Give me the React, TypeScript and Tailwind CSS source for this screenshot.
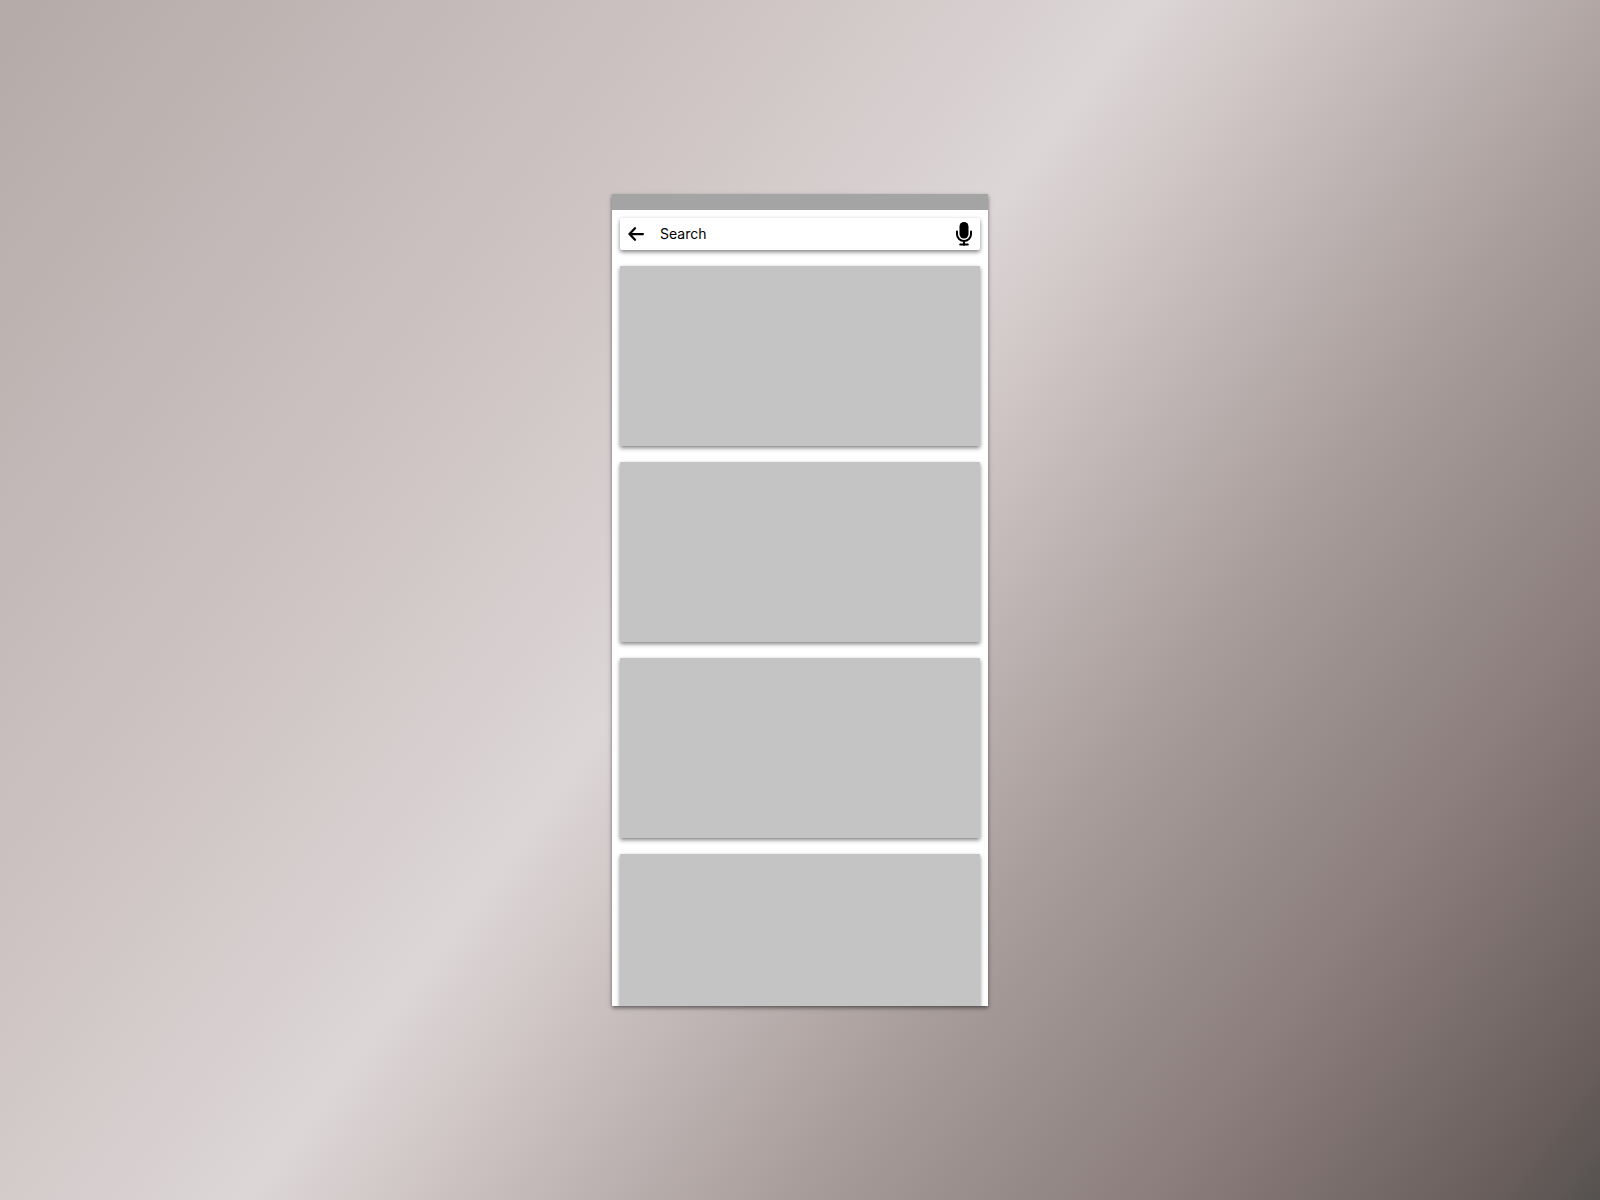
const cards = [1, 2, 3, 4];

function BackArrow() {
  return (
    <svg viewBox="0 0 16 14" className="h-3.5 w-4" fill="none" stroke="currentColor" strokeWidth="2.25" strokeLinecap="round" aria-hidden="true">
      <path d="M7 1.2 1.5 7 7 12.8M1.5 7H14.9" />
    </svg>
  );
}

function Microphone() {
  return (
    <svg viewBox="0 0 16 24" className="h-6 w-4" aria-hidden="true">
      <rect x="3.5" y="0" width="9" height="16.5" rx="4.5" fill="currentColor" />
      <path d="M1 9.5v2.7a7 6.8 0 0 0 14 0V9.5M8 19v4M4.2 22.5h7.6" fill="none" stroke="currentColor" strokeWidth="2" strokeLinecap="round" />
    </svg>
  );
}

export default function App() {
  return (
    <div className="flex min-h-screen items-center justify-center bg-[linear-gradient(127deg,#b4aaa8_0%,#d0c6c6_32%,#dcd6d6_46%,#d0c6c6_52%,#a79c9a_68%,#8b7e7c_82%,#6b5f5d_95%,#555250_100%)] font-[Inter,sans-serif] text-black">
      <main className="flex h-[812px] w-full max-w-[376px] flex-col overflow-hidden bg-white shadow-[0_2px_4px_rgba(0,0,0,0.5)]">
        <div className="h-4 shrink-0 bg-[#a4a4a4]" />
        <div className="flex flex-col gap-4 p-2">
          <form role="search" className="flex h-8 shrink-0 items-center gap-4 rounded-xs bg-white px-2 shadow-[0_2px_4px_rgba(0,0,0,0.5)]">
            <button type="button" aria-label="Back">
              <BackArrow />
            </button>
            <input
              type="search"
              aria-label="Search"
              placeholder="Search"
              className="min-w-0 flex-1 bg-transparent text-sm outline-none placeholder:text-black"
            />
            <button type="button" aria-label="Voice search">
              <Microphone />
            </button>
          </form>
          {cards.map((card) => (
            <article key={card} className="h-[180px] shrink-0 rounded-[1px] bg-[#c4c4c4] shadow-[0_2px_4px_rgba(0,0,0,0.5)]" />
          ))}
        </div>
      </main>
    </div>
  );
}
